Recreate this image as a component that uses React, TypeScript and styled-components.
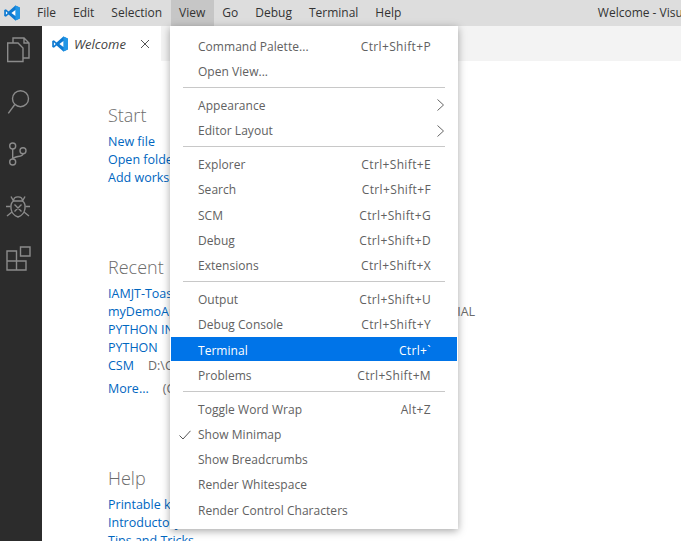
import styled, { createGlobalStyle } from "styled-components"

const GlobalStyle = createGlobalStyle`
    html, body {
        margin: 0;
        height: 100%;
        overflow: hidden;
        background: #fff;
        font-family: "Open Sans", "Noto Sans", sans-serif;
    }
`

const menuNames = ["File", "Edit", "Selection", "View", "Go", "Debug", "Terminal", "Help"]

type Entry =
    | { sep: true }
    | { label: string; keys?: string; sub?: boolean; checked?: boolean; active?: boolean; sep?: false }

const viewMenu: Entry[] = [
    { label: "Command Palette...", keys: "Ctrl+Shift+P" },
    { label: "Open View..." },
    { sep: true },
    { label: "Appearance", sub: true },
    { label: "Editor Layout", sub: true },
    { sep: true },
    { label: "Explorer", keys: "Ctrl+Shift+E" },
    { label: "Search", keys: "Ctrl+Shift+F" },
    { label: "SCM", keys: "Ctrl+Shift+G" },
    { label: "Debug", keys: "Ctrl+Shift+D" },
    { label: "Extensions", keys: "Ctrl+Shift+X" },
    { sep: true },
    { label: "Output", keys: "Ctrl+Shift+U" },
    { label: "Debug Console", keys: "Ctrl+Shift+Y" },
    { label: "Terminal", keys: "Ctrl+`", active: true },
    { label: "Problems", keys: "Ctrl+Shift+M" },
    { sep: true },
    { label: "Toggle Word Wrap", keys: "Alt+Z" },
    { label: "Show Minimap", checked: true },
    { label: "Show Breadcrumbs" },
    { label: "Render Whitespace" },
    { label: "Render Control Characters" }
]

function Logo() {
    return (
        <LogoSvg viewBox="0 0 16 16">
            <path d="M11.4 0.4 L15.8 2.4 V13.6 L11.4 15.6 L4.6 9.6 L1.9 11.7 L0.2 10.9 V5.1 L1.9 4.3 L4.6 6.4 Z" fill="#0e7ad2" />
            <path d="M11.4 0.4 L15.8 2.4 V13.6 L11.4 15.6 Z" fill="#2196e6" />
            <path d="M11.4 4.9 L7.4 8 L11.4 11.1 Z M1.9 6.2 V9.8 L3.7 8 Z" fill="#fff" />
        </LogoSvg>
    )
}

export default function App() {
    return (
        <>
            <GlobalStyle />
            <Window>
                <TitleBar>
                    <LogoSlot>
                        <Logo />
                    </LogoSlot>
                    {menuNames.map((name) => (
                        <MenuName key={name} open={name === "View"}>
                            {name}
                        </MenuName>
                    ))}
                    <WindowTitle>Welcome - Visual Studio Code</WindowTitle>
                </TitleBar>
                <Body>
                    <ActivityBar>
                        <ActivityIcon viewBox="0 0 28 28">
                            <path d="M6 7 V2 H17 L22 7 V22 H16 M17 2 V7 H22" />
                            <path d="M6 7 H11 L16 12 V25.5 H0.7 V7 H6" />
                        </ActivityIcon>
                        <ActivityIcon viewBox="0 0 28 28">
                            <circle cx="13.5" cy="10.7" r="8" />
                            <path d="M7.8 16.5 L1.3 25.3" />
                        </ActivityIcon>
                        <ActivityIcon viewBox="0 0 28 28">
                            <circle cx="5.7" cy="6" r="3" />
                            <circle cx="5.7" cy="22" r="3" />
                            <circle cx="16" cy="10.7" r="3" />
                            <path d="M5.7 9 V19 M16 13.7 C16 17.5 7 15.5 5.7 19" />
                        </ActivityIcon>
                        <ActivityIcon viewBox="0 0 28 28">
                            <path d="M6.5 9 C6.5 3.5 15.5 3.5 15.5 9 C19.5 12 19.5 22 11 25 C2.5 22 2.5 12 6.5 9 Z" />
                            <path d="M6.5 9 H15.5 M7.5 12.5 L14.5 19.5 M14.5 12.5 L7.5 19.5 M4 4.5 L6.5 9 M18 4.5 L15.5 9 M-1 14.5 H3.5 M18.5 14.5 H23 M0 24 L5 20 M22 24 L17 20" />
                        </ActivityIcon>
                        <ActivityIcon viewBox="0 0 28 28">
                            <path d="M0 7 H9.5 V26 H0 Z M0 17 H19 V26 H9.5" />
                            <path d="M13.5 3 H23 V12 H13.5 Z" />
                        </ActivityIcon>
                    </ActivityBar>
                    <Main>
                        <TabStrip>
                            <Tab>
                                <Logo />
                                <TabLabel>Welcome</TabLabel>
                                <svg width="10" height="10" viewBox="0 0 10 10">
                                    <path d="M1 1 L9 9 M9 1 L1 9" stroke="#555" strokeWidth="1" fill="none" />
                                </svg>
                            </Tab>
                        </TabStrip>
                        <Page>
                            <Section>
                                <Heading>Start</Heading>
                                <LinkRow><LinkText>New file</LinkText></LinkRow>
                                <LinkRow><LinkText>Open folder...</LinkText></LinkRow>
                                <LinkRow><LinkText>Add workspace folder...</LinkText></LinkRow>
                            </Section>
                            <Section>
                                <Heading>Recent</Heading>
                                <LinkRow><LinkText>IAMJT-Toast</LinkText></LinkRow>
                                <LinkRow>
                                    <LinkText>myDemoApp</LinkText>
                                    <PathText>D:\Code\Projects\Learnings\PYTHON\TUTORIAL</PathText>
                                </LinkRow>
                                <LinkRow><LinkText>PYTHON INTRO</LinkText></LinkRow>
                                <LinkRow><LinkText>PYTHON</LinkText></LinkRow>
                                <LinkRow>
                                    <LinkText>CSM</LinkText>
                                    <PathText>D:\Code</PathText>
                                </LinkRow>
                                <MoreRow>
                                    <LinkText>More...</LinkText>
                                    <PathText>(Ctrl+R)</PathText>
                                </MoreRow>
                            </Section>
                            <Section>
                                <Heading>Help</Heading>
                                <LinkRow><LinkText>Printable keyboard cheatsheet</LinkText></LinkRow>
                                <LinkRow><LinkText>Introductory videos</LinkText></LinkRow>
                                <LinkRow><LinkText>Tips and Tricks</LinkText></LinkRow>
                            </Section>
                        </Page>
                    </Main>
                </Body>
                <Menu>
                    {viewMenu.map((entry, i) =>
                        entry.sep ? (
                            <Separator key={i} />
                        ) : (
                            <Item key={i} active={entry.active}>
                                <Check>
                                    {entry.checked && (
                                        <svg width="12" height="10" viewBox="0 0 12 10">
                                            <path d="M0.5 5.5 L4 9 L11.5 0.8" stroke="#555" strokeWidth="1" fill="none" />
                                        </svg>
                                    )}
                                </Check>
                                <span>{entry.label}</span>
                                {entry.keys && <Keys>{entry.keys}</Keys>}
                                {entry.sub && (
                                    <SubArrow width="7" height="12" viewBox="0 0 7 12">
                                        <path d="M0.5 0.5 L6.5 6 L0.5 11.5" stroke="#666" strokeWidth="1" fill="none" />
                                    </SubArrow>
                                )}
                            </Item>
                        )
                    )}
                </Menu>
            </Window>
        </>
    )
}

const Window = styled.div`
    position: relative;
    display: flex;
    flex-direction: column;
    width: 681px;
    height: 541px;
    overflow: hidden;
`

const TitleBar = styled.div`
    display: flex;
    align-items: stretch;
    flex: 0 0 26px;
    background: #dddddd;
    color: #333;
    font-size: 12px;
    line-height: 26px;
    white-space: nowrap;
    overflow: hidden;
`

const LogoSlot = styled.div`
    display: flex;
    align-items: center;
    justify-content: center;
    flex: 0 0 24px;
    margin-right: 4.5px;
`

const LogoSvg = styled.svg`
    flex: 0 0 16px;
    width: 16px;
    height: 16px;
`

const MenuName = styled.div<{ open?: boolean }>`
    flex: none;
    padding: 0 8.5px;
    background: ${({ open }) => (open ? "#c6c6c6" : "transparent")};
`

const WindowTitle = styled.div`
    flex: none;
    margin-left: 188px;
`

const Body = styled.div`
    display: flex;
    flex: 1;
    min-height: 0;
`

const ActivityBar = styled.div`
    display: flex;
    flex-direction: column;
    align-items: center;
    gap: 24px;
    flex: 0 0 42px;
    padding-top: 10px;
    box-sizing: border-box;
    background: #2c2c2c;
`

const ActivityIcon = styled.svg`
    width: 28px;
    height: 28px;
    overflow: visible;
    fill: none;
    stroke: #8b8b8b;
    stroke-width: 1.4;
`

const Main = styled.div`
    flex: 1;
    min-width: 0;
    display: flex;
    flex-direction: column;
`

const TabStrip = styled.div`
    display: flex;
    flex: 0 0 35px;
    background: #f3f3f3;
`

const Tab = styled.div`
    display: flex;
    align-items: center;
    gap: 6px;
    width: 119px;
    box-sizing: border-box;
    padding-left: 10px;
    background: #fff;
`

const TabLabel = styled.span`
    width: 60px;
    font-size: 13px;
    font-style: italic;
    color: #444;
`

const Page = styled.div`
    flex: 1;
    min-height: 0;
    overflow: hidden;
    padding: 41px 0 0 66px;
`

const Section = styled.div`
    height: 152px;
    &:nth-child(2) {
        height: 211px;
    }
`

const Heading = styled.div`
    font-size: 18px;
    line-height: 26px;
    font-weight: 300;
    color: #6c6c6c;
    margin-bottom: 5px;
`

const LinkRow = styled.div`
    font-size: 12.5px;
    line-height: 18px;
    white-space: nowrap;
`

const MoreRow = styled(LinkRow)`
    margin-top: 5px;
`

const LinkText = styled.span`
    color: #0066bf;
`

const PathText = styled.span`
    margin-left: 14px;
    color: #6c6c6c;
`

const Menu = styled.div`
    position: absolute;
    left: 170px;
    top: 26px;
    width: 288px;
    height: 503px;
    box-sizing: border-box;
    padding: 7px 1px 0;
    background: #fff;
    box-shadow: 0 2px 8px rgba(0, 0, 0, 0.35);
`

const Item = styled.div<{ active?: boolean }>`
    display: flex;
    align-items: center;
    box-sizing: border-box;
    height: 25.2px;
    padding-top: 0.9px;
    font-size: 12px;
    letter-spacing: 0.04px;
    color: ${({ active }) => (active ? "#fff" : "#616161")};
    background: ${({ active }) =>
        active ? "linear-gradient(#0074e8, #0074e8) no-repeat top / 100% 24px" : "transparent"};
`

const Check = styled.div`
    display: flex;
    align-items: center;
    justify-content: center;
    width: 27px;
`

const Keys = styled.span`
    margin-left: auto;
    padding-right: 26px;
    letter-spacing: 0.35px;
`

const SubArrow = styled.svg`
    margin-left: auto;
    margin-right: 13px;
`

const Separator = styled.div`
    height: 1px;
    margin: 3.2px 12px 4.8px;
    background: #c8c8c8;
`
